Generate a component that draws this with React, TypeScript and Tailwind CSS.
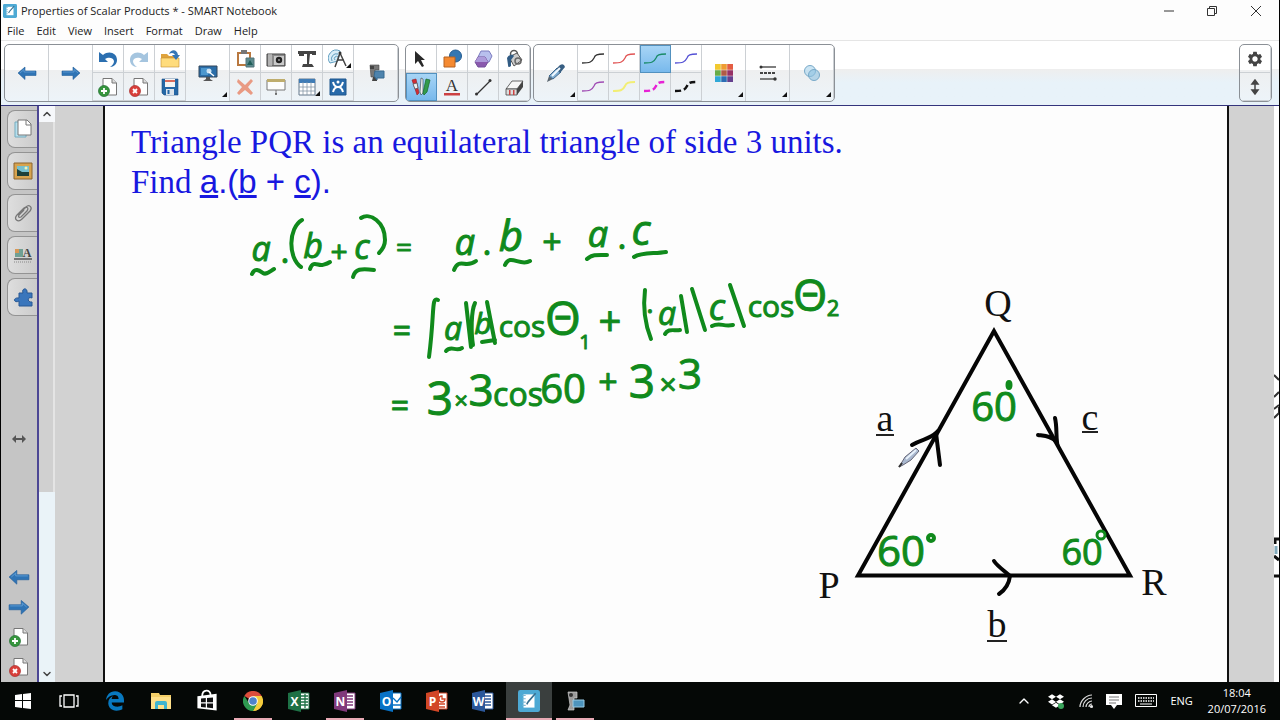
import type { ReactNode } from 'react';
import { FaDropbox, FaEdgeLegacy } from 'react-icons/fa6';
import { MdSettings } from 'react-icons/md';
import { ChevronDown, ChevronUp } from 'lucide-react';

interface IconProps {
  children: ReactNode;
  size?: 'sm' | 'md';
}

function Icon({ children, size = 'sm' }: IconProps) {
  return (
    <svg viewBox="0 0 20 20" className={size === 'md' ? 'h-6 w-6' : 'h-5 w-5'} fill="none" aria-hidden="true">
      {children}
    </svg>
  );
}

const arrowLeft = (
  <Icon>
    <path d="M1 10l7-6v4h11v4.500H8v4z" fill="#2f74b5" stroke="#235f9b" strokeWidth=".6" />
    <path d="M3 10l4-3.500v2.500h11" stroke="#63a0d6" strokeWidth=".8" />
  </Icon>
);

const arrowRight = (
  <Icon>
    <path d="M19 10l-7-6v4H1v4.500h11v4z" fill="#2f74b5" stroke="#235f9b" strokeWidth=".6" />
    <path d="M2 9h11v-2.500l4 3.500" stroke="#63a0d6" strokeWidth=".8" />
  </Icon>
);

const pageShape = (
  <>
    <path d="M5 1.500h9l4.500 4.500v12H5z" fill="#fff" stroke="#777" />
    <path d="M14 1.500V6h4.500" fill="#ddd" stroke="#777" />
  </>
);

const addPage = (
  <Icon>
    {pageShape}
    <circle cx="6" cy="14" r="5.500" fill="#36953d" stroke="#1f7030" strokeWidth=".7" />
    <path d="M6 11v6M3 14h6" stroke="#fff" strokeWidth="1.800" />
  </Icon>
);

const deletePage = (
  <Icon>
    {pageShape}
    <circle cx="6" cy="14" r="5.500" fill="#d9403b" stroke="#a92b29" strokeWidth=".7" />
    <path d="M4 12l4 4M8 12l-4 4" stroke="#fff" strokeWidth="1.800" />
  </Icon>
);

const undo = (
  <Icon>
    <path d="M5 6c6-5 14-2 14 5 0 4-3 7-7 7 3-2 4-4 4-6-1-4-6-4-9-2l3 3H1V3z" fill="#2b6fb0" />
  </Icon>
);

const redo = (
  <Icon>
    <path d="M15 6C9 1 1 4 1 11c0 4 3 7 7 7-3-2-4-4-4-6 1-4 6-4 9-2l-3 3h9V3z" fill="#a5c5df" />
  </Icon>
);

const openFile = (
  <Icon>
    <path d="M1 5h6l2 2h9v11H1z" fill="#dfa33c" />
    <path d="M1 9h18v9H1z" fill="#ffdc7c" stroke="#c48d30" strokeWidth=".6" />
    <path d="M9 5c2-5 8-5 9 1h2l-4 5-4-5h3c-1-2-3-3-6-1z" fill="#3477b7" />
  </Icon>
);

const save = (
  <Icon>
    <path d="M2 2h16v16H4l-2-2z" fill="#2467a6" stroke="#1b4f83" strokeWidth=".6" />
    <path d="M5 2h10v8H5z" fill="#f4f4f4" />
    <path d="M5 3h10v2H5z" fill="#d96b5c" />
    <path d="M6 12h8v6H6z" fill="#dce4ec" />
    <path d="M7.500 13h2v4h-2z" fill="#2467a6" />
  </Icon>
);

const monitor = (
  <Icon>
    <path d="M1 3h18v11H1z" fill="#2a6da8" stroke="#33475a" />
    <path d="M3 5h7v7H3z" fill="#4c97ce" />
    <path d="M8 14h4v2l3 2H5l3-2z" fill="#555" />
    <circle cx="11" cy="8" r="2.500" fill="#cfe5f5" />
    <path d="M11 9l5 4" stroke="#fff" strokeWidth="1.500" />
  </Icon>
);

const paste = (
  <Icon>
    <path d="M2 3h14v14H2z" fill="#b9783f" />
    <path d="M4 5h10v10H4z" fill="#fff" />
    <path d="M6 1h6v4H6z" fill="#777" />
    <path d="M11 9h8v9h-8z" fill="#5b8a8c" stroke="#55747a" />
    <path d="M12 16l3-5 3 5z" fill="#215e59" />
  </Icon>
);

const photo = (
  <Icon>
    <path d="M1 5h18v12H1z" fill="#8a8a8a" stroke="#444" />
    <path d="M3 5v12M5 5v12" stroke="#ddd" />
    <path d="M8 7h10v9H8z" fill="#c9c9c9" />
    <circle cx="13" cy="11" r="3.200" fill="#222" />
    <circle cx="13" cy="11" r="1" fill="#999" />
  </Icon>
);

const docCamera = (
  <Icon>
    <path d="M1 2h18v4h-4V5H7v2H2V5H1z" fill="#444" />
    <path d="M10 5h3l-1 10h3l2 3H5l1-3h4z" fill="#444" />
  </Icon>
);

const measure = (
  <Icon>
    <path d="M2 14A8 8 0 0112 2l-2 10z" fill="#d8edf8" stroke="#5f9dbf" />
    <path d="M4 12a5 5 0 016-7M7 11a2 2 0 013-3" stroke="#5f9dbf" />
    <path d="M12 4L7 18M12 4l6 13M9 11h7" stroke="#444" strokeWidth="1.500" />
    <circle cx="12" cy="4" r="1.500" fill="#333" />
  </Icon>
);

const cross = (
  <Icon>
    <path d="M3 2l7 6 6-6 2 2-5 6 5 6-2 2-6-5-6 5-2-2 5-6-5-5z" fill="#e99a83" />
  </Icon>
);

const shade = (
  <Icon>
    <path d="M1 3h18v10H1z" fill="#fdfdfd" stroke="#777" />
    <path d="M1 2h18v3H1z" fill="#bfad6d" />
    <path d="M10 13v4" stroke="#777" />
    <circle cx="10" cy="17" r="1" fill="#555" />
  </Icon>
);

const tableIcon = (
  <Icon>
    <path d="M2 2h16v16H2z" fill="#fff" stroke="#65798c" />
    <path d="M2 2h16v4H2z" fill="#3f7cb6" />
    <path d="M6 5v13M10 5v13M14 5v13M2 10h16M2 14h16" stroke="#8797a6" strokeWidth=".8" />
  </Icon>
);

const addOn = (
  <Icon>
    <path d="M2 2h16v16H2z" fill="#286aaa" stroke="#1f568d" />
    <path d="M5 5c1 4 3 5 5 5s4-1 5-5M5 15c1-4 3-5 5-5s4 1 5 5" stroke="#fff" strokeWidth="2" />
    <circle cx="10" cy="5" r="1.500" fill="#fff" />
  </Icon>
);

const recorder = (
  <Icon>
    <path d="M4 2h9v5H9v7H5z" fill="#777" stroke="#444" strokeWidth=".6" />
    <path d="M4 3h4v3H4zM7 14h4v4H6z" fill="#444" />
    <path d="M9 8h9v7h-7v2l-3-4z" fill="#4d83ad" stroke="#37698f" />
  </Icon>
);

const pointer = (
  <Icon>
    <path d="M4 2v13l3-3 4 6 2-1-3-6h4z" fill="#292929" />
  </Icon>
);

const shapes = (
  <Icon>
    <circle cx="13.500" cy="7" r="6" fill="#3577b1" stroke="#235b91" />
    <path d="M2 8h11v10H2z" fill="#f58a31" stroke="#b56222" />
  </Icon>
);

const polygons = (
  <Icon>
    <path d="M8 2h8l3 5-3 6H8L5 8z" fill="#b8bfed" stroke="#7c7cc0" />
    <path d="M5 8h7l3 5-3 5H5l-3-5z" fill="#8a59ad" stroke="#74509a" />
    <path d="M5 8h7l3 5H2z" fill="#ad9bda" />
  </Icon>
);

const bucket = (
  <Icon>
    <circle cx="10" cy="5" r="3.500" stroke="#555" strokeWidth="1.500" />
    <path d="M5 8l8-4 5 7-8 6z" fill="#ccc" stroke="#555" />
    <path d="M3 9c2-4 6-4 7-2l-3 4v6c-2 2-3 1-3-1z" fill="#315b83" />
    <circle cx="14" cy="12" r="3" stroke="#666" strokeWidth="1.500" />
  </Icon>
);

const pens = (
  <Icon>
    <path d="M1 3l4-1 3 14-2 2z" fill="#d22d32" stroke="#912228" strokeWidth=".6" />
    <path d="M2 7l4-1 1 5-3 1zM10 1l2 1v14l-2 2-1-3z" fill="#eee" stroke="#44515b" strokeWidth=".7" />
    <path d="M15 2l4 1-3 12-3 3-1-2z" fill="#329b4b" stroke="#18652a" strokeWidth=".7" />
  </Icon>
);

const textTool = (
  <Icon>
    <text x="10" y="14" textAnchor="middle" fontSize="17" fontFamily="Liberation Serif, serif" fill="#333">A</text>
    <path d="M2 16h16v2.500H2z" fill="#cc4143" />
  </Icon>
);

const lineTool = (
  <Icon>
    <path d="M4 17L17 4" stroke="#333" strokeWidth="1.300" />
    <circle cx="3.500" cy="17" r="1.500" fill="#333" />
    <circle cx="17" cy="3.500" r="1.500" fill="#333" />
  </Icon>
);

const eraser = (
  <Icon>
    <path d="M8 4h11l-6 8H2z" fill="#f7f7f7" stroke="#444" strokeWidth=".8" />
    <path d="M2 12h11v6H2z" fill="#ddd" stroke="#444" strokeWidth=".8" />
    <path d="M13 12l6-8v6l-6 8z" fill="#444" />
    <path d="M5 13h1.500v5H5zM9 13h1.500v5H9z" fill="#cc4343" />
  </Icon>
);

const pencil = (
  <Icon>
    <path d="M1 19l2-6 4 3z" fill="#5b6670" />
    <path d="M3 13l8-8 4 4-8 7z" fill="#7facd0" stroke="#42698e" />
    <path d="M10 6l4-4q4-2 5 2l-5 6z" fill="#385f83" />
    <path d="M6 13l8-8" stroke="#f2f9ff" strokeWidth="2" />
  </Icon>
);

const palette = (
  <Icon>
    <path d="M1 1h6v6H1z" fill="#f2c92f" />
    <path d="M7 1h6v6H7z" fill="#ef9c32" />
    <path d="M13 1h6v6h-6z" fill="#e45d43" />
    <path d="M1 7h6v6H1z" fill="#68ac46" />
    <path d="M7 7h6v6H7z" fill="#b05b45" />
    <path d="M13 7h6v6h-6z" fill="#963166" />
    <path d="M1 13h6v6H1z" fill="#30a8d7" />
    <path d="M7 13h6v6H7z" fill="#2c6db4" />
    <path d="M13 13h6v6h-6z" fill="#65408e" />
    <path d="M7 1v18M13 1v18M1 7h18M1 13h18" stroke="#eee" strokeWidth=".5" />
  </Icon>
);

const lineStyles = (
  <Icon>
    <path d="M2 4h16M2 16h16" stroke="#555" strokeWidth="1.300" />
    <path d="M2 10h16" stroke="#444" strokeWidth="1.800" strokeDasharray="3 1" />
    <circle cx="3" cy="4" r="1.500" fill="#333" />
    <circle cx="17" cy="16" r="1.700" fill="#333" />
  </Icon>
);

const transparency = (
  <Icon>
    <circle cx="8" cy="8" r="5.500" fill="#b5daef" fillOpacity=".7" stroke="#78a9c8" />
    <circle cx="12" cy="12" r="5.500" fill="#8dc2e1" fillOpacity=".6" stroke="#78a9c8" />
  </Icon>
);

interface PenStrokeProps {
  color: string;
  dashed?: boolean;
  wide?: boolean;
}

function PenStroke({ color, dashed, wide }: PenStrokeProps) {
  return (
    <svg viewBox="0 0 24 16" className="h-4 w-6" fill="none" aria-hidden="true">
      <path
        d="M1 12c8 0 10-1 12-5 1-3 3-4 10-4"
        stroke={color}
        strokeWidth={dashed ? 2.5 : wide ? 2 : 1.3}
        strokeDasharray={dashed ? '6 3' : undefined}
      />
    </svg>
  );
}

interface ToolProps {
  label: string;
  children: ReactNode;
  active?: boolean;
  menu?: boolean;
  large?: boolean;
}

function Tool({ label, children, active, menu, large }: ToolProps) {
  return (
    <button
      type="button"
      aria-label={label}
      className={`relative flex items-center justify-center border-r border-[#ccd0d4] ${large ? 'w-11' : 'h-7 w-[31px] border-b'} ${active ? 'bg-linear-to-b from-[#a9d6f6] to-[#78b9ec] outline -outline-offset-1 outline-[#5291bf]' : ''}`}
    >
      {children}
      {menu && (
        <svg viewBox="0 0 5 5" className="absolute right-0.5 bottom-1 h-[5px] w-[5px]" aria-hidden="true">
          <path d="M5 0v5H0z" fill="#111" />
        </svg>
      )}
    </button>
  );
}

function ToolGroup({ children }: { children: ReactNode }) {
  return (
    <div className="flex h-14 shrink-0 overflow-hidden rounded bg-linear-to-b from-white from-45% via-[#eeeff0] via-45% to-[#edf4f9] outline outline-[#8b9096]">
      {children}
    </div>
  );
}

function ToolGrid({ children }: { children: ReactNode }) {
  return <div className="grid shrink-0 grid-flow-col grid-rows-2">{children}</div>;
}

function Toolbar() {
  return (
    <div className="flex h-[66px] items-start gap-1 border-t border-b border-t-[#e5e5e5] border-b-[#34347c] bg-linear-to-b from-white from-44% via-[#eeeeee] via-44% to-[#e8f2f9] to-65% px-1 pt-1">
      <div className="mr-1">
        <ToolGroup>
          <Tool label="Previous page" large>{arrowLeft}</Tool>
          <Tool label="Next page" large>{arrowRight}</Tool>
          <ToolGrid>
            <Tool label="Undo">{undo}</Tool>
            <Tool label="Add page">{addPage}</Tool>
            <Tool label="Redo">{redo}</Tool>
            <Tool label="Delete page">{deletePage}</Tool>
            <Tool label="Open file">{openFile}</Tool>
            <Tool label="Save">{save}</Tool>
          </ToolGrid>
          <Tool label="View screens" large menu>{monitor}</Tool>
          <ToolGrid>
            <Tool label="Paste">{paste}</Tool>
            <Tool label="Delete">{cross}</Tool>
            <Tool label="Screen capture">{photo}</Tool>
            <Tool label="Screen shade">{shade}</Tool>
            <Tool label="Document camera">{docCamera}</Tool>
            <Tool label="Table" menu>{tableIcon}</Tool>
            <Tool label="Measurement tools" menu>{measure}</Tool>
            <Tool label="Add-ons">{addOn}</Tool>
          </ToolGrid>
          <Tool label="Recorder" large>{recorder}</Tool>
        </ToolGroup>
      </div>
      <ToolGroup>
        <ToolGrid>
          <Tool label="Select">{pointer}</Tool>
          <Tool label="Pens" active>{pens}</Tool>
          <Tool label="Shapes">{shapes}</Tool>
          <Tool label="Text">{textTool}</Tool>
          <Tool label="Regular polygons">{polygons}</Tool>
          <Tool label="Lines">{lineTool}</Tool>
          <Tool label="Fill">{bucket}</Tool>
          <Tool label="Eraser">{eraser}</Tool>
        </ToolGrid>
      </ToolGroup>
      <ToolGroup>
        <Tool label="Pen types" large menu>{pencil}</Tool>
        <ToolGrid>
          <Tool label="Black pen"><PenStroke color="#333" /></Tool>
          <Tool label="Purple pen"><PenStroke color="#a04cb4" /></Tool>
          <Tool label="Red pen"><PenStroke color="#e15454" /></Tool>
          <Tool label="Yellow highlighter"><PenStroke color="#f2ee75" wide /></Tool>
          <Tool label="Green pen" active><PenStroke color="#198b68" /></Tool>
          <Tool label="Magenta dashes"><PenStroke color="#e722d5" dashed /></Tool>
          <Tool label="Blue pen"><PenStroke color="#5552d5" /></Tool>
          <Tool label="Black dashes"><PenStroke color="#111" dashed /></Tool>
        </ToolGrid>
        <Tool label="Colour" large menu>{palette}</Tool>
        <Tool label="Line style" large menu>{lineStyles}</Tool>
        <Tool label="Transparency" large menu>{transparency}</Tool>
      </ToolGroup>
      <div className="mr-1 ml-auto">
        <ToolGroup>
          <ToolGrid>
            <Tool label="Customise toolbar"><MdSettings className="h-[18px] w-[18px] text-[#444]" /></Tool>
            <Tool label="Move toolbar">
              <Icon><path d="M10 4v12M7 7l3-4 3 4zM7 13l3 4 3-4z" fill="#444" stroke="#444" strokeWidth="1.500" /></Icon>
            </Tool>
          </ToolGrid>
        </ToolGroup>
      </div>
    </div>
  );
}

const sideTabs = [
  {
    label: 'Page sorter',
    icon: (
      <Icon>
        <path d="M2 3h11v15H2z" fill="#b7e0ee" stroke="#74acbf" />
        <path d="M5 1h9l4 4v11H5z" fill="#fff" stroke="#777" />
        <path d="M13 1v5h5" stroke="#777" />
      </Icon>
    ),
  },
  {
    label: 'Gallery',
    icon: (
      <Icon>
        <path d="M1 2h18v16H1z" fill="#d7a34e" stroke="#8c652e" />
        <path d="M4 5h12v10H4z" fill="#77c0ce" />
        <path d="M4 8l5 3h7v4H4z" fill="#1e4139" />
        <circle cx="13" cy="7" r="1.500" fill="#eef4bb" />
      </Icon>
    ),
  },
  {
    label: 'Attachments',
    icon: (
      <Icon>
        <path d="M5 12l8-8c3-3 7 0 4 4l-8 8c-4 4-9 0-5-4l7-7c3-2 5 0 3 3l-6 6c-2 1-3 0-2-2l5-5" stroke="#777" strokeWidth="1.300" />
      </Icon>
    ),
  },
  {
    label: 'Properties',
    icon: (
      <Icon>
        <path d="M2 4h8v8H2z" fill="#70a094" />
        <path d="M2 4h4v4H2z" fill="#d79757" />
        <text x="14" y="12" textAnchor="middle" fontSize="12" fontWeight="bold" fontFamily="Liberation Serif, serif" fill="#444">A</text>
        <path d="M1 14h18" stroke="#555" strokeWidth="1.500" />
        <path d="M1 17h18" stroke="#888" strokeDasharray="1 1" />
      </Icon>
    ),
  },
  {
    label: 'Add-ons',
    icon: (
      <Icon>
        <path d="M6 6h4c-2-5 5-6 4 0h5v5c-5-2-5 5 0 4v4H6v-5c-5 3-7-4 0-3z" fill="#3a76bc" stroke="#285894" />
      </Icon>
    ),
  },
];

function Sidebar() {
  return (
    <nav aria-label="Page tools" className="flex w-9 shrink-0 flex-col bg-[#c5c5c5] pt-1">
      <div className="flex flex-col gap-1 pl-1.5">
        {sideTabs.map((tab) => (
          <button
            key={tab.label}
            type="button"
            aria-label={tab.label}
            className="flex h-[38px] items-center justify-center rounded-l-lg border border-r-0 border-[#939393] bg-linear-to-r from-[#dedede] to-[#cbcbcb]"
          >
            {tab.icon}
          </button>
        ))}
      </div>
      <button type="button" aria-label="Move sidebar" className="flex flex-1 items-center justify-center">
        <svg viewBox="0 0 14 8" className="h-2 w-3.5" aria-hidden="true">
          <path d="M0 4l4-4v3h6V0l4 4-4 4V5H4v3z" fill="#555" />
        </svg>
      </button>
      <div className="flex flex-col items-center">
        <button type="button" aria-label="Back" className="flex h-[30px] scale-110 items-center">{arrowLeft}</button>
        <button type="button" aria-label="Forward" className="flex h-[30px] scale-110 items-center">{arrowRight}</button>
        <button type="button" aria-label="New page" className="flex h-[30px] items-center">{addPage}</button>
        <button type="button" aria-label="Remove page" className="flex h-[30px] items-center">{deletePage}</button>
      </div>
    </nav>
  );
}

function Scrollbar() {
  return (
    <div className="flex w-4 shrink-0 flex-col bg-[#eaf3f8]">
      <button type="button" aria-label="Scroll up" className="flex h-4 items-center justify-center bg-[#f6f8fb]">
        <ChevronUp className="h-3 w-3 text-[#444]" strokeWidth={3} />
      </button>
      <div className="flex flex-1 flex-col">
        <div className="h-[68%] border-r-2 border-[#e4e4e4] bg-[#d0d0d0]" />
      </div>
      <button type="button" aria-label="Scroll down" className="flex h-4 items-center justify-center">
        <ChevronDown className="h-3 w-3 text-[#444]" strokeWidth={3} />
      </button>
    </div>
  );
}

// Text written on the page: [text, centre x, baseline, size]
const vectors: [string, number, number, number][] = [
  ['a', 261, 261, 34],
  ['b', 313, 258, 34],
  ['c', 362, 259, 34],
  ['a', 465, 255, 36],
  ['b', 511, 251, 42],
  ['a', 598, 247, 36],
  ['c', 641, 245, 42],
  ['a', 453, 340, 32],
  ['b', 483, 334, 30],
  ['a', 667, 325, 32],
  ['c', 717, 320, 36],
];

const workings: [string, number, number, number][] = [
  ['.', 285, 263, 34],
  ['+', 339, 262, 30],
  ['=', 404, 257, 28],
  ['.', 487, 255, 34],
  ['+', 552, 254, 34],
  ['.', 622, 249, 34],
  ['=', 402, 342, 32],
  ['cos', 522, 337, 30],
  ['Θ', 563, 335, 46],
  ['1', 585, 349, 20],
  ['+', 610, 336, 40],
  ['.', 650, 313, 28],
  ['cos', 771, 317, 30],
  ['Θ', 810, 311, 44],
  ['2', 833, 316, 22],
  ['=', 400, 417, 32],
  ['3', 440, 415, 46],
  ['×', 461, 409, 24],
  ['3', 481, 406, 44],
  ['cos', 518, 406, 32],
  ['60', 563, 403, 40],
  ['+', 608, 394, 34],
  ['3', 642, 398, 46],
  ['×', 668, 395, 30],
  ['3', 690, 389, 42],
  ['60', 994, 421, 40],
  ['60', 901, 566, 42],
  ['60', 1082, 565, 36],
];

// Brackets, modulus bars and vector marks
const inkMarks = [
  'M252 274c3-7 8-3 11-1s6-1 11-4',
  'M302 220c-14 8-14 38-1 47',
  'M310 269c3-9 8-3 12-4s5-1 8-3',
  'M353 277c2-8 8-9 21-7',
  'M361 218c9-6 24 4 24 22c0 6-3 10-6 13',
  'M454 270c5-13 12-1 22-9',
  'M505 265c5-12 15 2 25-4',
  'M587 259c5-5 12-4 20-4',
  'M634 257c8-5 20-3 32-5',
  'M438 300c-7-3-3 10-9 57',
  'M446 351c5-6 10 1 16-3',
  'M466 303l5 44',
  'M475 303c-4 8-4 30-2 42',
  'M487 302l8 41M482 342l13-2',
  'M645 290c-2 16 0 34 6 49',
  'M665 334c3-6 9-3 15-4',
  'M681 296l6 36M692 289l13 41',
  'M712 326c8-4 11 1 21-1',
  'M730 285l14 41',
];

const pointLabels: [string, number, number][] = [
  ['Q', 998, 316],
  ['P', 829, 598],
  ['R', 1154, 595],
  ['a', 885, 431],
  ['b', 997, 637],
  ['c', 1090, 430],
];

function Canvas() {
  return (
    <svg
      viewBox="105 106 1122 576"
      preserveAspectRatio="xMinYMin meet"
      className="pointer-events-none absolute inset-0 h-full w-full"
      fill="none"
    >
      <g stroke="#050505" strokeWidth="4">
        <path d="M994 331L858 575.500H1130z" />
        <g strokeLinecap="round">
          <path d="M912 445c10-6 18-6 24-12l4 32" />
          <path d="M1055 418c2 8 1 17 2 24-6-6-12-6-19-7" />
          <path d="M994 561c4 6 11 10 16 15-1 8-5 14-11 18" />
        </g>
      </g>
      <g fontFamily="Liberation Serif, serif" fill="#111">
        {pointLabels.map(([t, x, y]) => (
          <text key={t} x={x} y={y} fontSize="38" textAnchor="middle">{t}</text>
        ))}
      </g>
      <path d="M876 435h18M987 641h20M1082 432h16" stroke="#222" strokeWidth="2" />
      <g fontFamily="Open Sans, sans-serif" fill="#108a1c" stroke="#108a1c" strokeWidth="1" strokeLinejoin="round">
        {vectors.map(([t, x, y, size], i) => (
          <text key={i} x={x} y={y} fontSize={size} textAnchor="middle" className="italic">{t}</text>
        ))}
        {workings.map(([t, x, y, size], i) => (
          <text key={i} x={x} y={y} fontSize={size} textAnchor="middle">{t}</text>
        ))}
      </g>
      <g stroke="#108a1c" strokeWidth="4" strokeLinecap="round" strokeLinejoin="round">
        {inkMarks.map((d) => (
          <path key={d} d={d} />
        ))}
        <ellipse cx="1009" cy="385" rx="1.500" ry="3" />
        <circle cx="931" cy="538" r="3" />
        <circle cx="1101" cy="535" r="4" strokeWidth="3" />
      </g>
      <path d="M899 467l6-10 11-9 3 3-8 9-8 5z" fill="#a9b8cf" stroke="#667" />
      <path d="M906 459l10-9" stroke="#e9f2fb" strokeWidth="2" />
      <path d="M899 467l3-4" stroke="#333" strokeWidth="2" />
    </svg>
  );
}

function Page() {
  return (
    <main className="relative flex-1 border-r-2 border-l-2 border-[#111] bg-[#fdfdfd]">
      <div className="pt-4 pl-[26px] font-['Liberation_Serif',serif] text-[33px] leading-10 text-[#1818e0]">
        <p>Triangle PQR is an equilateral triangle of side 3 units.</p>
        <p>
          Find{' '}
          <span className="font-['Liberation_Sans',sans-serif]">
            <u>a</u>.(<u>b</u> + <u>c</u>).
          </span>
        </p>
      </div>
      <Canvas />
    </main>
  );
}

function OfficeIcon({ letter, color, sheet }: { letter: string; color: string; sheet: string }) {
  return (
    <svg viewBox="0 0 22 22" className="h-[22px] w-[22px]" aria-hidden="true">
      <path d="M10 3h11v16H10z" fill="#fff" stroke={color} />
      <path d={sheet} stroke={color} strokeWidth="1.300" fill="none" />
      <path d="M0 3l13-3v22L0 19z" fill={color} />
      <text x="6.500" y="15.500" textAnchor="middle" fontSize="12" fontWeight="bold" fontFamily="Open Sans, sans-serif" fill="#fff">{letter}</text>
    </svg>
  );
}

const rows = 'M13 6h6M13 9h6M13 12h6M13 15h6';

const taskItems: { label: string; icon: ReactNode; open?: boolean; active?: boolean }[] = [
  {
    label: 'Start',
    icon: <Icon><path d="M2 4l7-1v6H2zM10 3l8-1v7h-8zM2 10h7v7l-7-1zM10 10h8v8l-8-1z" fill="#fff" /></Icon>,
  },
  {
    label: 'Task view',
    icon: <Icon><path d="M5 4h10v12H5zM3 5H1v10h2M17 5h2v10h-2" stroke="#fff" strokeWidth="1.300" /></Icon>,
  },
  { label: 'Edge', icon: <FaEdgeLegacy className="h-5 w-5 text-[#0878bf]" /> },
  {
    label: 'File Explorer',
    icon: (
      <Icon>
        <path d="M0 2h8l1 2h11v14H0z" fill="#f4cf68" />
        <path d="M0 6h20v12H0z" fill="#ffe08a" />
        <path d="M4 18v-6q0-2 2-2h8q2 0 2 2v6h-3v-4H7v4z" fill="#40b5cf" />
      </Icon>
    ),
  },
  {
    label: 'Store',
    icon: (
      <Icon size="md">
        <path d="M2 6l16-2v14L2 16z" fill="#fff" />
        <path d="M6 6c0-6 7-6 7-1" stroke="#fff" strokeWidth="1.500" />
        <path d="M5 8l4-.500v3.500H5zM10 7.500l5-.500v4h-5zM5 12h4v3.500L5 15zM10 12h5v4l-5-.500z" fill="#111" />
      </Icon>
    ),
  },
  {
    label: 'Chrome',
    open: true,
    icon: (
      <Icon>
        <path d="M10 10L1.300 5A10 10 0 0118.700 5z" fill="#dc4d3c" />
        <path d="M10 10h10A10 10 0 0110 20l4-7z" fill="#f5cc3c" />
        <path d="M18.700 5A10 10 0 0110 20l4-8-4-7z" fill="#f5cc3c" />
        <path d="M1.300 5A10 10 0 0010 20l4-7-8-1z" fill="#2e9a50" />
        <circle cx="10" cy="10" r="4.800" fill="#fff" />
        <circle cx="10" cy="10" r="3.800" fill="#4d82cb" />
      </Icon>
    ),
  },
  { label: 'Excel', icon: <OfficeIcon letter="X" color="#1e7145" sheet="M13 6h7M13 9h7M13 12h7M13 15h7M17 4v14" /> },
  { label: 'OneNote', open: true, icon: <OfficeIcon letter="N" color="#80397b" sheet={rows} /> },
  { label: 'Outlook', icon: <OfficeIcon letter="O" color="#0872c6" sheet="M13 8l4 4 4-5M13 15h8" /> },
  { label: 'PowerPoint', icon: <OfficeIcon letter="P" color="#d24726" sheet="M16 6a3 3 0 103 3h-3zM13 14h6M13 17h6" /> },
  { label: 'Word', icon: <OfficeIcon letter="W" color="#2b579a" sheet={rows} /> },
  {
    label: 'SMART Notebook',
    open: true,
    active: true,
    icon: <NotebookIcon className="h-[22px] w-[22px]" />,
  },
  {
    label: 'SMART Recorder',
    open: true,
    icon: (
      <Icon>
        <path d="M3 1h9v6H9v12H3l2-5z" fill="#9b9b9b" stroke="#ccc" strokeWidth=".7" />
        <circle cx="6" cy="4" r="2" fill="#333" />
        <path d="M8 9h11v7H8z" fill="#4d94bd" stroke="#9bcbe4" />
      </Icon>
    ),
  },
];

function NotebookIcon({ className }: { className: string }) {
  return (
    <svg viewBox="0 0 20 20" className={className} fill="none" aria-hidden="true">
      <rect width="20" height="20" rx="2" fill="#4da9d4" />
      <path d="M5 4h10v12H5z" fill="#fff" />
      <path d="M4 5h3M4 8h3M4 11h3M4 14h3" stroke="#7cb7d4" />
      <path d="M9 11l7-8M8 13l1-2" stroke="#376f90" strokeWidth="1.500" />
    </svg>
  );
}

function Taskbar() {
  return (
    <footer className="flex h-[38px] items-stretch bg-[#050806] text-white">
      {taskItems.map((item) => (
        <button
          key={item.label}
          type="button"
          aria-label={item.label}
          className={`relative flex w-[46px] shrink-0 items-center justify-center ${item.active ? 'bg-[#3a3f3e]' : ''}`}
        >
          {item.icon}
          {item.open && (
            <span className={`absolute bottom-0 h-0.5 bg-[#e8aab5] ${item.active ? 'inset-x-0' : 'inset-x-1'}`} />
          )}
        </button>
      ))}
      <div className="mr-3.5 ml-auto flex items-center">
        <button type="button" aria-label="Show hidden icons" className="flex w-8 justify-center">
          <ChevronUp className="h-4 w-4" />
        </button>
        <span className="relative flex w-8 justify-center">
          <FaDropbox className="h-4 w-4" />
          <span className="absolute right-2 bottom-0 h-1.5 w-1.5 rounded-full bg-[#3aa45c]" />
        </span>
        <span className="flex w-7 justify-center">
          <svg viewBox="0 0 16 16" className="h-4 w-4" fill="none" stroke="#ddd" strokeWidth="1.200" aria-hidden="true">
            <path d="M2 14C2 8 8 2 14 2M5 14c0-5 4-9 9-9M8 14c0-3 3-6 6-6M11 14c0-2 1-3 3-3" />
            <circle cx="13.500" cy="13.500" r="1" fill="#fff" />
          </svg>
        </span>
        <span className="flex w-7 justify-center">
          <svg viewBox="0 0 16 16" className="h-4 w-4" aria-hidden="true">
            <path d="M0 1h16v11h-5l-3 4-3-4H0z" fill="#fff" />
            <path d="M3 4h10M3 7h10M3 10h7" stroke="#777" />
          </svg>
        </span>
        <span className="flex w-9 justify-center">
          <svg viewBox="0 0 22 14" className="h-3.5 w-[22px]" fill="none" stroke="#fff" aria-hidden="true">
            <path d="M.500.500h21v12H.500z" />
            <path d="M3 4h16M3 7h16" strokeWidth="1.500" strokeDasharray="1.500 1" />
            <path d="M5 10h12" />
          </svg>
        </span>
        <span className="w-9 text-center text-[11px]">ENG</span>
        <div className="ml-2 text-center text-[11px] leading-4">
          <div>18:04</div>
          <div>20/07/2016</div>
        </div>
      </div>
    </footer>
  );
}

const menus = ['File', 'Edit', 'View', 'Insert', 'Format', 'Draw', 'Help'];

export default function App() {
  return (
    <div className="flex min-h-screen flex-col bg-[#fdfdfd] font-['Open_Sans',sans-serif] text-[11px] text-[#222]">
      <div className="flex flex-1 flex-col border-r border-l border-black">
        <header className="flex h-[22px] items-center pl-0.5">
          <NotebookIcon className="mr-1 h-3.5 w-3.5" />
          <h1>Properties of Scalar Products * - SMART Notebook</h1>
          <div className="mr-3 ml-auto flex items-center">
            <button type="button" aria-label="Minimise" className="flex w-[43px] justify-center">
              <svg viewBox="0 0 10 10" className="h-2.5 w-2.5"><path d="M0 5h10" stroke="#333" /></svg>
            </button>
            <button type="button" aria-label="Restore" className="flex w-[43px] justify-center">
              <svg viewBox="0 0 10 10" className="h-2.5 w-2.5" fill="none" stroke="#333"><path d="M.500 2.500h7v7h-7zM2.500 2V.500h7v7H8" /></svg>
            </button>
            <button type="button" aria-label="Close" className="ml-3 flex w-[22px] justify-center">
              <svg viewBox="0 0 10 10" className="h-2.5 w-2.5"><path d="M0 0l10 10M10 0L0 10" stroke="#333" /></svg>
            </button>
          </div>
        </header>
        <nav aria-label="Menu" className="flex h-[18px] items-center gap-3 pl-1.5">
          {menus.map((menu) => (
            <button key={menu} type="button">{menu}</button>
          ))}
        </nav>
        <Toolbar />
        <div className="flex flex-1">
          <Sidebar />
          <div className="flex flex-1 border-l-2 border-[#4c4794] bg-[#d2d2d2]">
            <Scrollbar />
            <div className="w-12 shrink-0" />
            <Page />
            <div className="w-[45px] shrink-0" />
            <svg viewBox="0 0 5 576" preserveAspectRatio="xMinYMin slice" className="w-[5px] shrink-0 bg-white" fill="none" aria-hidden="true">
              <path d="M0 269l5 5M0 291l5-5M0 303l5-4M0 312l5-5v-6" stroke="#333" strokeWidth="2" />
              <path d="M5 433H1v5M0 450l5 4M0 470h5" stroke="#111" strokeWidth="3" />
              <path d="M2 440v8" stroke="#83aabb" strokeWidth="3" />
            </svg>
          </div>
        </div>
      </div>
      <Taskbar />
    </div>
  );
}
